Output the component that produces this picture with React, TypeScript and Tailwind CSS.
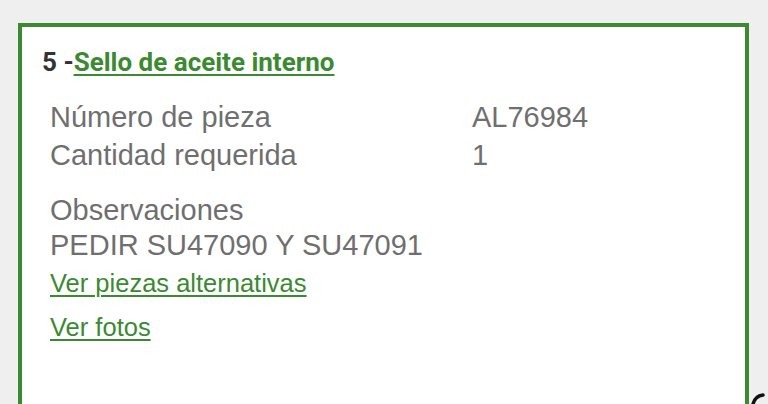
const rows = [
  { label: 'Número de pieza', value: 'AL76984' },
  { label: 'Cantidad requerida', value: '1' },
];

const PartCard = () => {
  return (
    <div className="flex-1 border-[4px] border-b-0 border-[#3b8a32] bg-white pl-[20px] pr-4 pt-[20px]">
      {/* Heading */}
      <h2 className="font-['Roboto',sans-serif] text-[26px] leading-[30px] font-bold text-[#333]">
        5 -<a href="#" className="text-[#3b8a32] underline underline-offset-[3px] decoration-[2px]">Sello de aceite interno</a>
      </h2>

      <div className="pl-[8px] pt-[21px] font-['Liberation_Sans',Arial,sans-serif] text-[#6f6f6f] text-[29px] leading-[35px]">
        {rows.map((row) => (
          <div key={row.label} className="flex leading-[38px]">
            <span className="w-[422px] shrink-0">{row.label}</span>
            <span>{row.value}</span>
          </div>
        ))}

        <div className="mt-[19px]">Observaciones</div>
        <div>PEDIR SU47090 Y SU47091</div>

        <div className="flex flex-col items-start gap-[13px] pt-[5px] text-[25.5px] leading-[31px] text-[#3b8a32]">
          <a href="#" className="underline underline-offset-[3px] decoration-[1.5px]">Ver piezas alternativas</a>
          <a href="#" className="underline underline-offset-[3px] decoration-[1.5px]">Ver fotos</a>
        </div>
      </div>
    </div>
  );
};

export default function App() {
  return (
    <div className="relative flex flex-col h-[404px] overflow-hidden bg-[#efefef] pt-[23px] pl-[18px] pr-[19px]">
      <PartCard />
      {/* stray glyph peeking in at the bottom right */}
      <svg className="absolute left-[750px] top-[393px]" width="18" height="11" viewBox="0 0 18 11">
        <path d="M3 11 Q5 3 13 2" stroke="#111" strokeWidth="3.5" fill="none" strokeLinecap="round" />
      </svg>
    </div>
  );
}
